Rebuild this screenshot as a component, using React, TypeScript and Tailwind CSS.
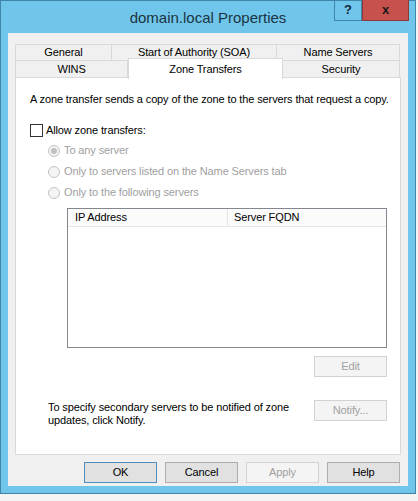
import React from "react";

const font = { fontFamily: '"Liberation Sans", Arial, sans-serif' };

function Tab({ label, w, selected }: { label: string; w: string; selected?: boolean }) {
  return (
    <div
      className={
        selected
          ? `${w} relative z-10 -mt-[2px] -mb-[1px] h-[21px] bg-white border border-b-0 border-[#d9d9d9] flex items-center justify-center text-black`
          : `${w} h-full bg-[#f0f0f0] border border-[#d9d9d9] -ml-px first:ml-0 flex items-center justify-center text-black`
      }
    >
      {label}
    </div>
  );
}

function Radio({ checked, label }: { checked?: boolean; label: string }) {
  return (
    <div className="flex items-center h-[21px]">
      <div className="w-[12px] h-[12px] rounded-full border border-[#c4c4c4] bg-[#f4f4f4] flex items-center justify-center">
        {checked && <div className="w-[6px] h-[6px] rounded-full bg-[#c0c0c0]" />}
      </div>
      <span className="ml-[4px] text-[#a0a0a0]">{label}</span>
    </div>
  );
}

function Btn({ label, kind }: { label: string; kind: "default" | "normal" | "disabled" }) {
  const cls =
    kind === "default"
      ? "bg-[#e1e1e1] border-[#4f8cc0] text-black"
      : kind === "normal"
      ? "bg-[#e1e1e1] border-[#adadad] text-black"
      : "bg-[#f4f4f4] border-[#d2d2d2] text-[#a0a0a0]";
  return (
    <div className={`w-[73px] h-[21px] border flex items-center justify-center ${cls}`}>{label}</div>
  );
}

export default function App() {
  return (
    <div className="w-[418px] h-[501px] bg-[#f4f4f4] text-[11px] tracking-[-0.12px]" style={font}>
      <div className="w-[416px] h-[494px] bg-[#70c6ea] border border-[#3f86a8] flex flex-col">
        {/* title bar */}
        <div className="relative h-[32px] flex justify-end pr-[6px]">
          <div className="absolute inset-0 flex items-center justify-center text-[15px] tracking-normal text-[#1c3442] pt-[2px]">
            domain.local Properties
          </div>
          <div className="relative w-[28px] h-[21px] -mt-px border border-t-0 border-[#3f86a8] flex items-center justify-center text-[13px] font-bold text-[#12263a]">
            ?
          </div>
          <div className="relative w-[47px] h-[21px] -mt-px bg-[#c7514c] border border-t-0 border-[#8e3a36] flex items-center justify-center text-[13px] font-bold text-[#1a1a1a]">
            x
          </div>
        </div>
        {/* client */}
        <div className="flex-1 mx-[7px] mb-[7px] bg-[#f0f0f0] px-[7px] pt-[11px] flex flex-col">
          <div className="flex h-[17px]">
            <Tab label="General" w="w-[97px]" />
            <Tab label="Start of Authority (SOA)" w="w-[166px]" />
            <Tab label="Name Servers" w="w-[124px]" />
          </div>
          <div className="flex h-[18px] -mt-px">
            <Tab label="WINS" w="w-[113px]" />
            <Tab label="Zone Transfers" w="w-[155px]" selected />
            <Tab label="Security" w="w-[118px]" />
          </div>
          <div className="h-[378px] -mt-px bg-white border border-[#d9d9d9] pl-[14px] pt-[14px] flex flex-col">
            <div className="text-black leading-[14px]">
              A zone transfer sends a copy of the zone to the servers that request a copy.
            </div>
            <div className="flex items-center mt-[17px] h-[14px]">
              <div className="w-[13px] h-[13px] border border-[#333333] bg-white" />
              <span className="ml-[3px] text-black">Allow zone transfers:</span>
            </div>
            <div className="pl-[18px] mt-[3px] flex flex-col">
              <Radio checked label="To any server" />
              <Radio label="Only to servers listed on the Name Servers tab" />
              <Radio label="Only to the following servers" />
            </div>
            <div className="ml-[37px] mt-[5px] w-[320px] h-[140px] border border-[#828790] flex flex-col">
              <div className="flex h-[18px] border-b border-[#e5e5e5] bg-[#fbfbfb]">
                <div className="w-[160px] border-r border-[#e5e5e5] pl-[7px] flex items-center text-black">IP Address</div>
                <div className="pl-[6px] flex items-center text-black">Server FQDN</div>
              </div>
            </div>
            <div className="flex justify-end w-[357px] mt-[8px]">
              <Btn label="Edit" kind="disabled" />
            </div>
            <div className="flex w-[357px] mt-[23px] justify-between">
              <div className="pl-[18px] pt-[1px] text-black leading-[13px]">
                To specify secondary servers to be notified of zone
                <br />
                updates, click Notify.
              </div>
              <Btn label="Notify..." kind="disabled" />
            </div>
          </div>
          <div className="flex justify-end gap-[8px] mt-[7px] pr-[1px]">
            <Btn label="OK" kind="default" />
            <Btn label="Cancel" kind="normal" />
            <Btn label="Apply" kind="disabled" />
            <Btn label="Help" kind="normal" />
          </div>
        </div>
      </div>
    </div>
  );
}
